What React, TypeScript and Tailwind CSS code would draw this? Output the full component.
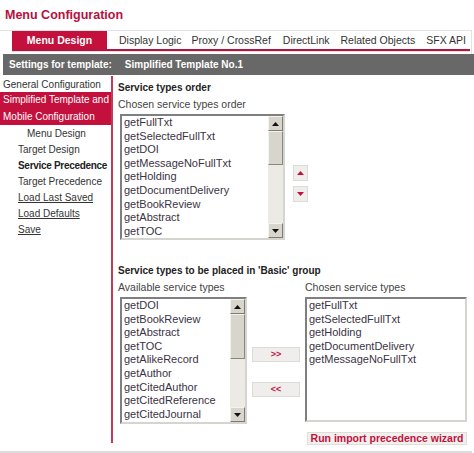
import React from 'react';

const tabs = ['Display Logic', 'Proxy / CrossRef', 'DirectLink', 'Related Objects', 'SFX API'];

const sideItems = [
  { label: 'Menu Design', cls: 'pl-[27px]' },
  { label: 'Target Design', cls: 'pl-[18px]' },
  { label: 'Service Precedence', cls: 'pl-[18px] font-bold text-[#222] tracking-[-0.3px]' },
  { label: 'Target Precedence', cls: 'pl-[18px]' },
  { label: 'Load Last Saved', cls: 'pl-[18px] underline' },
  { label: 'Load Defaults', cls: 'pl-[18px] underline' },
  { label: 'Save', cls: 'pl-[18px] underline' },
];

const orderList = [
  'getFullTxt',
  'getSelectedFullTxt',
  'getDOI',
  'getMessageNoFullTxt',
  'getHolding',
  'getDocumentDelivery',
  'getBookReview',
  'getAbstract',
  'getTOC',
];

const availableList = [
  'getDOI',
  'getBookReview',
  'getAbstract',
  'getTOC',
  'getAlikeRecord',
  'getAuthor',
  'getCitedAuthor',
  'getCitedReference',
  'getCitedJournal',
];

const chosenList = ['getFullTxt', 'getSelectedFullTxt', 'getHolding', 'getDocumentDelivery', 'getMessageNoFullTxt'];

function Tri({ up, color = '#111' }: { up: boolean; color?: string }) {
  return (
    <svg width="7" height="4" viewBox="0 0 7 4">
      <polygon points={up ? '3.5,0 7,4 0,4' : '0,0 7,0 3.5,4'} fill={color} />
    </svg>
  );
}

function ScrollBtn({ up }: { up: boolean }) {
  return (
    <div className="flex h-[15px] w-[15px] items-center justify-center border border-[#f4f3ee] border-b-[#7d7b74] border-r-[#7d7b74] bg-[#d8d5cc]">
      <Tri up={up} />
    </div>
  );
}

// classic windows-style vertical scrollbar
function Scrollbar({ thumb }: { thumb: string }) {
  return (
    <div className="flex h-full w-[15px] shrink-0 flex-col bg-[#eceae4]">
      <ScrollBtn up />
      <div className="flex-1">
        <div className={`${thumb} w-[15px] border border-[#f4f3ee] border-b-[#8a877f] border-r-[#8a877f] bg-[#d8d5cc]`} />
      </div>
      <ScrollBtn up={false} />
    </div>
  );
}

function ListBox({ items, size, thumb }: { items: string[]; size: string; thumb?: string }) {
  return (
    <div className={`${size} flex overflow-hidden border-2 border-[#7f7f7f] border-b-[#d6d4ce] border-r-[#d6d4ce] bg-white`}>
      <div className="flex-1 overflow-hidden pl-[2px] text-[11px] leading-[13.6px] text-[#3b3344]">
        {items.map((it) => (
          <div key={it} className="whitespace-nowrap">
            {it}
          </div>
        ))}
      </div>
      {thumb && <Scrollbar thumb={thumb} />}
    </div>
  );
}

function SmallBtn({ children, size }: { children: React.ReactNode; size: string }) {
  return (
    <div className={`${size} flex items-center justify-center border border-[#dddbd6] bg-[#efeeec]`}>{children}</div>
  );
}

export default function App() {
  return (
    <div
      className="relative h-[453px] w-[474px] overflow-hidden whitespace-nowrap bg-white text-[#333]"
      style={{ fontFamily: '"Liberation Sans", Arial, sans-serif' }}
    >
      {/* Title */}
      <div className="h-[30px] pl-[5px] pt-[8px] text-[12.5px] font-bold leading-[15px] text-[#b80f3c]">
        Menu Configuration
      </div>

      {/* Tabs */}
      <div className="mr-[2px] border-r border-t border-[#e2e2e2]">
        <div className="flex h-[18px] items-stretch pl-[12px] text-[10.5px] leading-[18px] text-[#333]">
          <div className="w-[95px] bg-[#c4103c] text-center font-bold text-white">Menu Design</div>
          <div className="pl-[12px]">{tabs[0]}</div>
          <div className="pl-[10px]">{tabs[1]}</div>
          <div className="pl-[12px]">{tabs[2]}</div>
          <div className="pl-[11px]">{tabs[3]}</div>
          <div className="pl-[11px]">{tabs[4]}</div>
        </div>
        <div className="ml-[12px] mr-[1px] h-[2px] bg-[#b0163f]" />
        <div className="ml-[12px] mr-[1px] h-[1px] bg-[#f1d9df]" />
        <div className="h-[2px]" />
      </div>

      {/* Settings bar */}
      <div className="ml-[3px] flex h-[21px] items-center bg-[#686868] text-[10px] font-bold text-white">
        <span className="pl-[6px]">Settings for template:</span>
        <span className="pl-[13px]">Simplified Template No.1</span>
      </div>

      <div className="flex">
        {/* Sidebar */}
        <div className="w-[111px] shrink-0 pt-[3px] text-[10px] text-[#333]">
          <div className="h-[14px] pl-[3px] leading-[14px]">General Configuration</div>
          <div className="h-[33px] bg-[#c4103c] pl-[3px] text-[10px] leading-[16.5px] text-white">
            <div>Simplified Template and</div>
            <div>Mobile Configuration</div>
          </div>
          <div className="pt-[1px]">
            {sideItems.map((s) => (
              <div key={s.label} className={`h-[16px] leading-[16px] ${s.cls}`}>
                {s.label}
              </div>
            ))}
          </div>
        </div>
        <div className="mt-[1px] h-[367px] w-[2px] shrink-0 bg-[#c23a5a]" />

        {/* Main */}
        <div className="flex-1 pl-[5px]">
          <div className="mt-[6px] h-[14px] text-[10px] font-bold leading-[14px] text-[#222]">Service types order</div>
          <div className="mt-[2px] h-[14px] text-[10.5px] leading-[14px] text-[#444]">Chosen service types order</div>
          <div className="mt-[3px] flex">
            <div className="ml-[2px]">
              <ListBox items={orderList} size="h-[126px] w-[165px]" thumb="h-[34px]" />
            </div>
            <div className="ml-[8px] mt-[51px] flex flex-col gap-[5px]">
              <SmallBtn size="h-[16px] w-[15px]">
                <Tri up color="#c4103c" />
              </SmallBtn>
              <SmallBtn size="h-[16px] w-[15px]">
                <Tri up={false} color="#c4103c" />
              </SmallBtn>
            </div>
          </div>

          <div className="mt-[24px] h-[14px] text-[10px] font-bold leading-[14px] text-[#222]">
            Service types to be placed in 'Basic' group
          </div>
          <div className="mt-[2px] flex">
            <div className="w-[129px]">
              <div className="h-[14px] text-[10.5px] leading-[14px] text-[#444]">Available service types</div>
              <div className="ml-[2px] mt-[3px]">
                <ListBox items={availableList} size="h-[127px] w-[127px]" thumb="h-[45px]" />
              </div>
            </div>
            <div className="ml-[5px] flex w-[48px] flex-col pt-[67px]">
              <SmallBtn size="h-[15px] w-[48px]">
                <span className="text-[9px] font-bold text-[#c4103c]">&gt;&gt;</span>
              </SmallBtn>
              <div className="mt-[20px]">
                <SmallBtn size="h-[15px] w-[48px]">
                  <span className="text-[9px] font-bold text-[#c4103c]">&lt;&lt;</span>
                </SmallBtn>
              </div>
            </div>
            <div className="ml-[5px] w-[162px]">
              <div className="h-[14px] text-[10.5px] leading-[14px] text-[#444]">Chosen service types</div>
              <div className="mt-[3px]">
                <ListBox items={chosenList} size="h-[125px] w-[162px]" />
              </div>
              <div className="ml-[2px] mt-[10px] flex h-[13px] w-[160px] items-center justify-center border border-[#e0dedb] bg-[#f1f0ee] text-[10.5px] font-bold leading-[13px] text-[#c4103c]">
                Run import precedence wizard
              </div>
            </div>
          </div>
        </div>
      </div>

      {/* bottom edge */}
      <div className="absolute bottom-0 left-0 h-[2px] w-[472px] bg-[#dcdcdc]" />
    </div>
  );
}
